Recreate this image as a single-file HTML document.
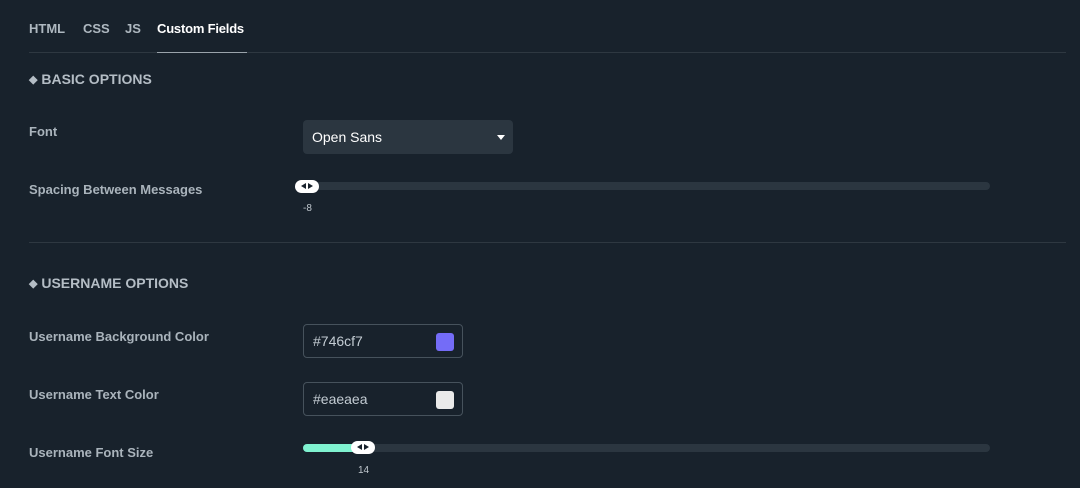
<!DOCTYPE html>
<html><head><style>
*{margin:0;padding:0;box-sizing:border-box}
body{width:1080px;height:488px;background:#18222c;font-family:"Liberation Sans",sans-serif;color:#b7c0c8;position:relative;overflow:hidden}
.a{position:absolute}
.tab{font-size:13px;font-weight:bold;top:21px;color:#aeb8c0}
.lbl{font-size:13px;font-weight:bold;color:#aab4bc;left:29px}
.h{font-size:14px;font-weight:bold;color:#b4bdc5;left:29px}
.h span{font-size:11px;position:relative;top:-1px}
.track{height:8px;background:#2b3640;border-radius:4px;left:303px;width:687px}
.thumb{width:24px;height:13px;background:#fff;border-radius:7px}
.thumb:before{content:"";position:absolute;left:6px;top:3px;border-right:5px solid #18222c;border-top:3.5px solid transparent;border-bottom:3.5px solid transparent}
.thumb:after{content:"";position:absolute;left:13px;top:3px;border-left:5px solid #18222c;border-top:3.5px solid transparent;border-bottom:3.5px solid transparent}
.inp{left:303px;width:160px;height:34px;border:1px solid #46525c;border-radius:4px;font-size:14px;color:#c3ccd3;padding:8px 0 0 9px}
.sw{position:absolute;right:8px;top:8px;width:18px;height:18px;border-radius:3px}
.val{font-size:10px;color:#c0c8ce}
</style></head><body>
<div class="a tab" style="left:29px">HTML</div>
<div class="a tab" style="left:83px">CSS</div>
<div class="a tab" style="left:125px">JS</div>
<div class="a tab" style="left:157px;color:#fff;letter-spacing:-0.2px">Custom Fields</div>
<div class="a" style="left:29px;top:52px;width:1037px;height:1px;background:#2e3841"></div>
<div class="a" style="left:157px;top:52px;width:90px;height:1px;background:#9aa3ab"></div>

<div class="a h" style="top:71px"><span>◆</span> BASIC OPTIONS</div>
<div class="a lbl" style="top:124px">Font</div>
<div class="a" style="left:303px;top:120px;width:210px;height:34px;background:#2b3640;border-radius:4px;font-size:14px;color:#fff;padding:9px 0 0 9px">Open Sans
<div class="a" style="right:8px;top:15px;border-top:5px solid #fff;border-left:4.5px solid transparent;border-right:4.5px solid transparent"></div></div>
<div class="a lbl" style="top:182px">Spacing Between Messages</div>
<div class="a track" style="top:182px"></div>
<div class="a thumb" style="left:295px;top:180px"></div>
<div class="a val" style="left:303px;top:203px">-8</div>
<div class="a" style="left:29px;top:242px;width:1037px;height:1px;background:#2e3841"></div>

<div class="a h" style="top:275px"><span>◆</span> USERNAME OPTIONS</div>
<div class="a lbl" style="top:329px">Username Background Color</div>
<div class="a inp" style="top:324px">#746cf7<div class="sw" style="background:#746cf7"></div></div>
<div class="a lbl" style="top:387px">Username Text Color</div>
<div class="a inp" style="top:382px">#eaeaea<div class="sw" style="background:#eaeaea"></div></div>
<div class="a lbl" style="top:445px">Username Font Size</div>
<div class="a track" style="top:444px"></div>
<div class="a" style="left:303px;top:444px;width:60px;height:8px;background:#7ff2d0;border-radius:4px"></div>
<div class="a thumb" style="left:351px;top:441px"></div>
<div class="a val" style="left:358px;top:465px">14</div>
</body></html>
